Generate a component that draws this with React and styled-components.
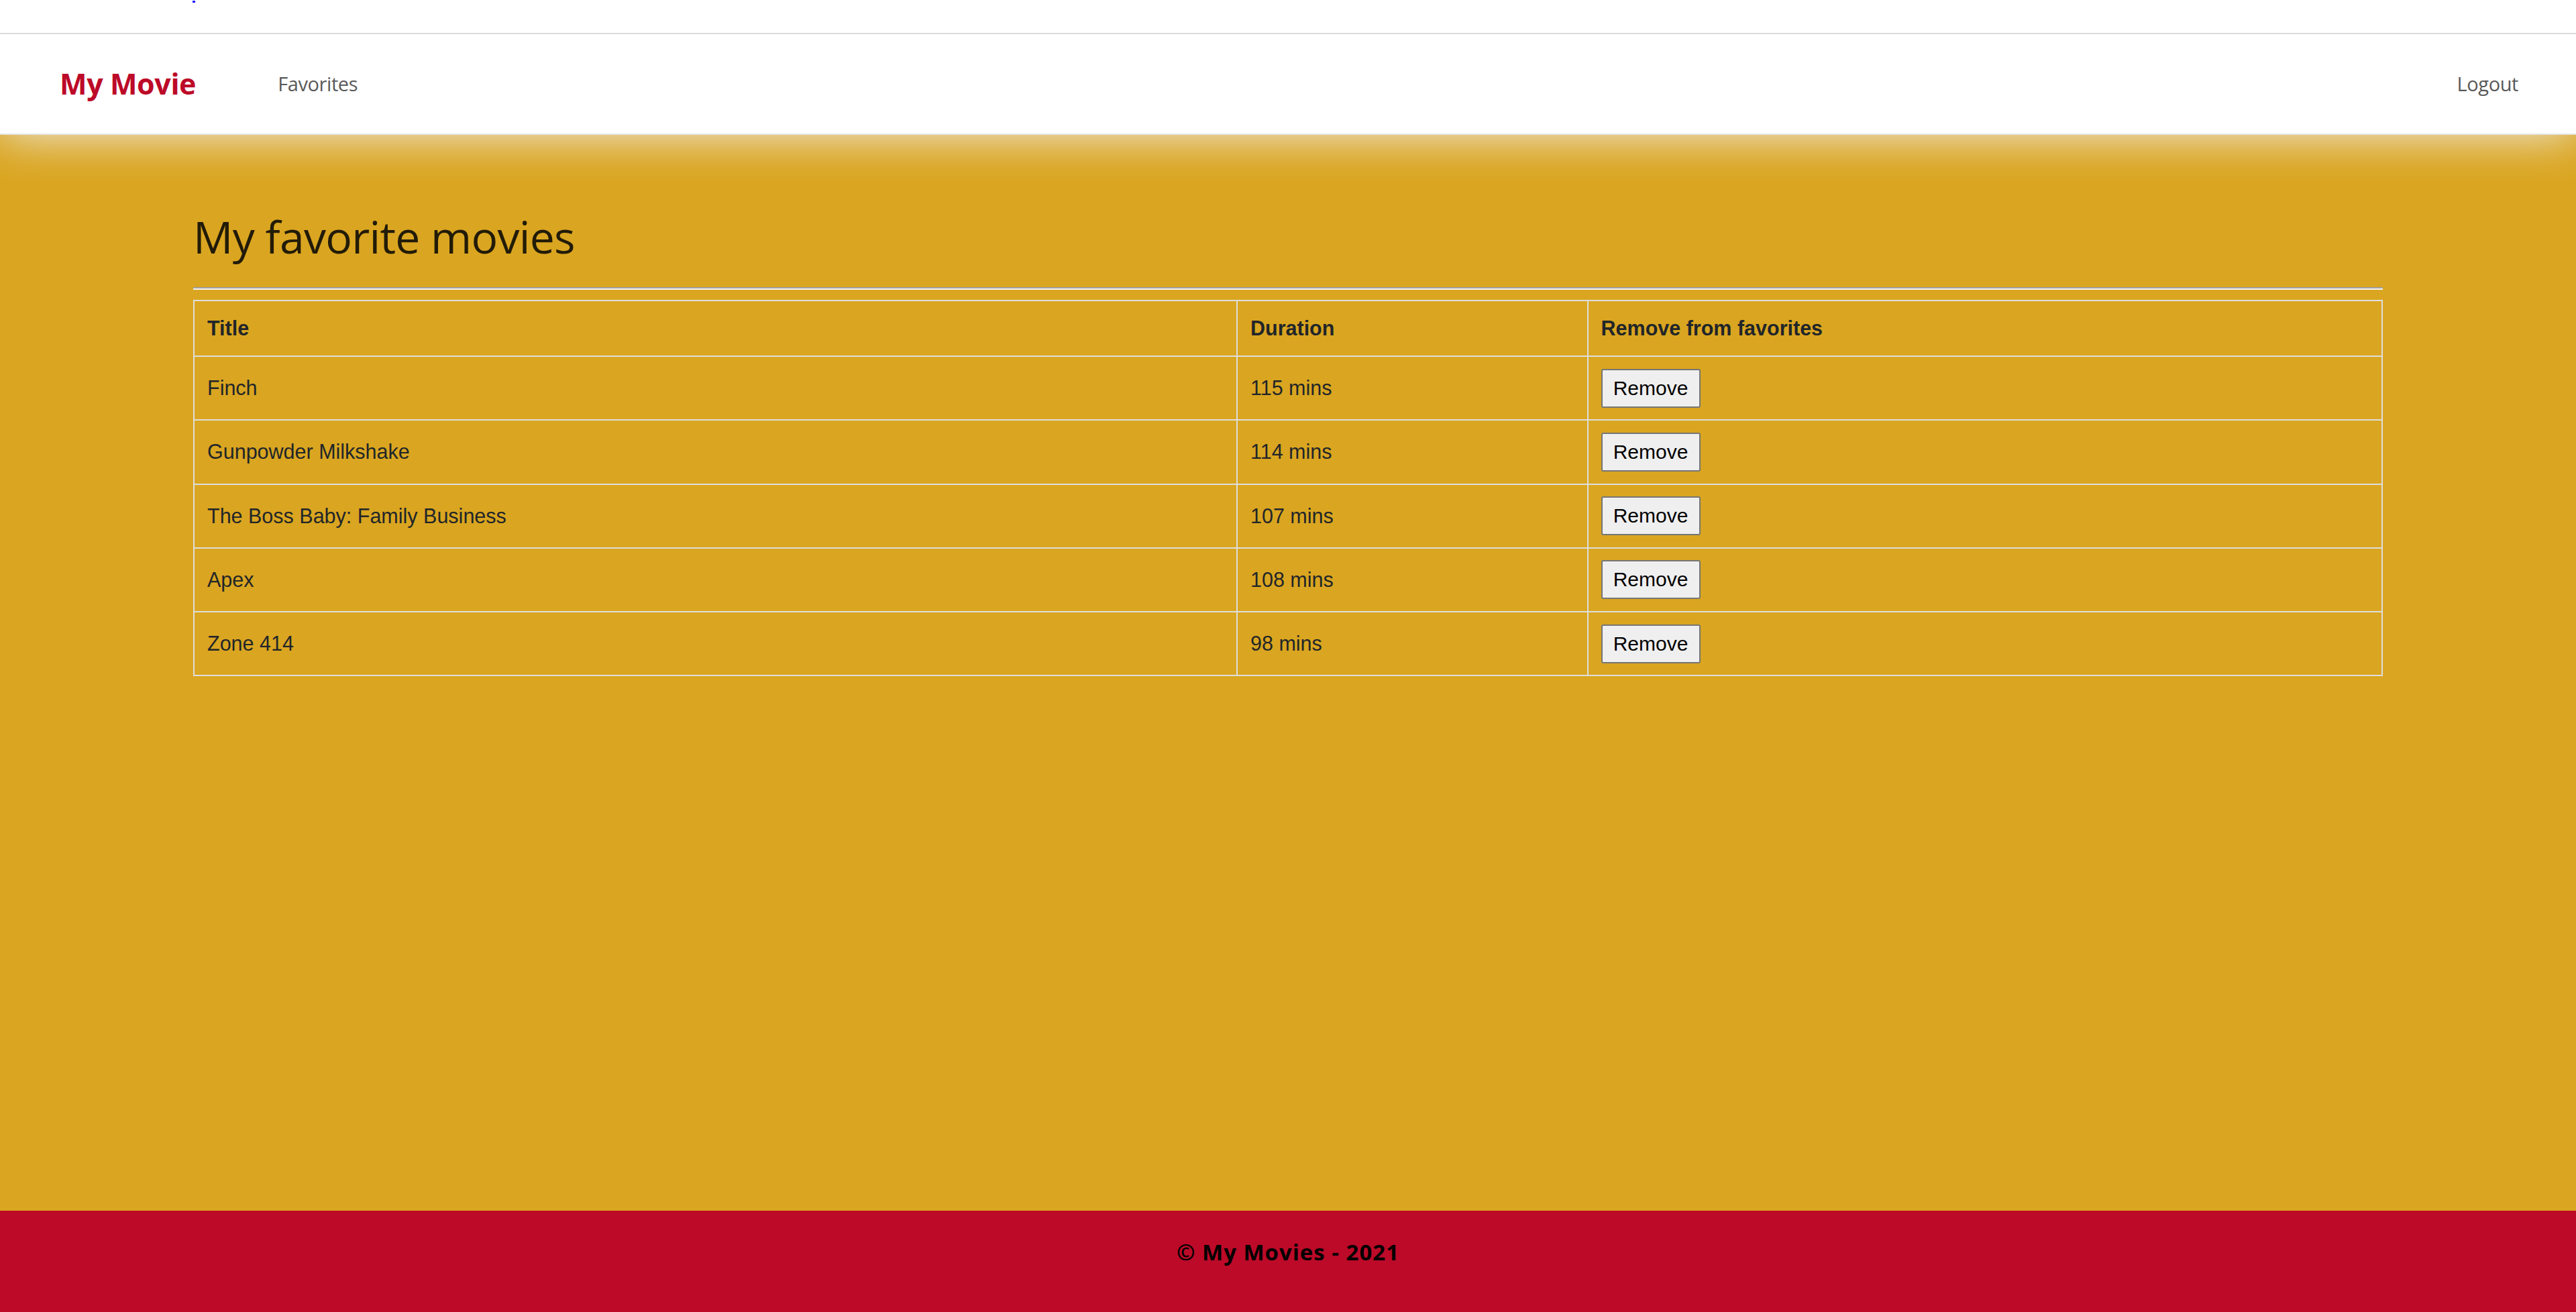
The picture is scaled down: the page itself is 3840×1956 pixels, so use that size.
import React from 'react';
import styled, { createGlobalStyle } from 'styled-components';

const GlobalStyle = createGlobalStyle`
  html, body {
    margin: 0;
    padding: 0;
    background: #ffffff;
  }
  body {
    font-family: "Open Sans", "Noto Sans", sans-serif;
  }
  * {
    box-sizing: border-box;
  }
`;

/* STYLED COMPONENTS */
const Page = styled.div`
  display: flex;
  flex-direction: column;
  min-height: 1956px;
`;

const TopStrip = styled.div`
  position: relative;
  z-index: 2;
  height: 51px;
  background: #ffffff;
  border-bottom: 2px solid #dcdcdc;
`;

const FocusMark = styled.span`
  display: block;
  width: 4px;
  height: 3px;
  margin: 1px 0 0 287px;
  background: #1a1aff;
`;

const NavBar = styled.nav`
  position: relative;
  z-index: 1;
  display: flex;
  align-items: center;
  height: 150px;
  padding: 0 86px 0 89px;
  background: #ffffff;
  border-bottom: 2px solid #e6e6e6;
  box-shadow: 0 0 70px rgb(240, 240, 240);
`;

const Brand = styled.a`
  font-size: 43px;
  font-weight: 700;
  letter-spacing: -0.4px;
  line-height: 1.2;
  color: #bc0a28;
  text-decoration: none;
`;

const NavLink = styled.a`
  margin-left: ${(p) => (p.$right ? 'auto' : '122px')};
  font-size: 29px;
  font-weight: 400;
  letter-spacing: -0.4px;
  line-height: 1.2;
  color: #595959;
  text-decoration: none;
`;

const Main = styled.main`
  flex: 1;
  background: #daa520;
  padding-top: 112px;
`;

const Container = styled.div`
  width: 85%;
  margin: 0 auto;
`;

const Heading = styled.h1`
  margin: 0;
  font-size: 66px;
  font-weight: 400;
  letter-spacing: -0.7px;
  line-height: 1.2;
  color: #221b08;
`;

const Rule = styled.hr`
  margin: 36px 0 15px;
  height: 0;
  border: 0;
  border-top: 2px solid #a0a0a0;
  border-bottom: 2px solid #f4f4f4;
`;

const Table = styled.table`
  width: 100%;
  table-layout: fixed;
  border-collapse: collapse;
  font-family: "Liberation Sans", Arial, sans-serif;
  font-size: 30.5px;
  color: #212529;
`;

const HeadRow = styled.tr`
  height: 83px;
`;

const Row = styled.tr`
  height: 95.2px;
`;

const HeadCell = styled.th`
  padding: 0 19px;
  border: 2px solid #dedede;
  text-align: left;
  font-weight: 700;
  vertical-align: middle;
`;

const Cell = styled.td`
  padding: 0 19px;
  border: 2px solid #dedede;
  vertical-align: middle;
`;

const RemoveButton = styled.button`
  width: 148px;
  height: 58px;
  padding: 0;
  font-family: "Liberation Sans", Arial, sans-serif;
  font-size: 30px;
  color: #000000;
  background: #efefef;
  border: 2px solid #767676;
  border-radius: 3px;
  cursor: pointer;
`;

const Footer = styled.footer`
  height: 151px;
  padding-top: 42px;
  background: #bc0a28;
  text-align: center;
  font-size: 33px;
  font-weight: 700;
  letter-spacing: 1px;
  line-height: 40px;
  color: #000000;
`;
/* STYLED COMPONENTS END */

const favorites = [
  { id: 1, title: 'Finch', duration: 115 },
  { id: 2, title: 'Gunpowder Milkshake', duration: 114 },
  { id: 3, title: 'The Boss Baby: Family Business', duration: 107 },
  { id: 4, title: 'Apex', duration: 108 },
  { id: 5, title: 'Zone 414', duration: 98 },
];

const App = () => (
  <>
    <GlobalStyle />
    <Page>
      <TopStrip>
        <FocusMark />
      </TopStrip>
      <NavBar>
        <Brand href="#">My Movie</Brand>
        <NavLink href="#">Favorites</NavLink>
        <NavLink href="#" $right>
          Logout
        </NavLink>
      </NavBar>
      <Main>
        <Container>
          <Heading>My favorite movies</Heading>
          <Rule />
          <Table>
            <colgroup>
              <col style={{ width: '47.67%' }} />
              <col style={{ width: '16.02%' }} />
              <col style={{ width: '36.31%' }} />
            </colgroup>
            <thead>
              <HeadRow>
                <HeadCell>Title</HeadCell>
                <HeadCell>Duration</HeadCell>
                <HeadCell>Remove from favorites</HeadCell>
              </HeadRow>
            </thead>
            <tbody>
              {favorites.map((movie) => (
                <Row key={movie.id}>
                  <Cell>{movie.title}</Cell>
                  <Cell>{`${movie.duration} mins`}</Cell>
                  <Cell>
                    <RemoveButton type="button">Remove</RemoveButton>
                  </Cell>
                </Row>
              ))}
            </tbody>
          </Table>
        </Container>
      </Main>
      <Footer>© My Movies - 2021</Footer>
    </Page>
  </>
);

export default App;
